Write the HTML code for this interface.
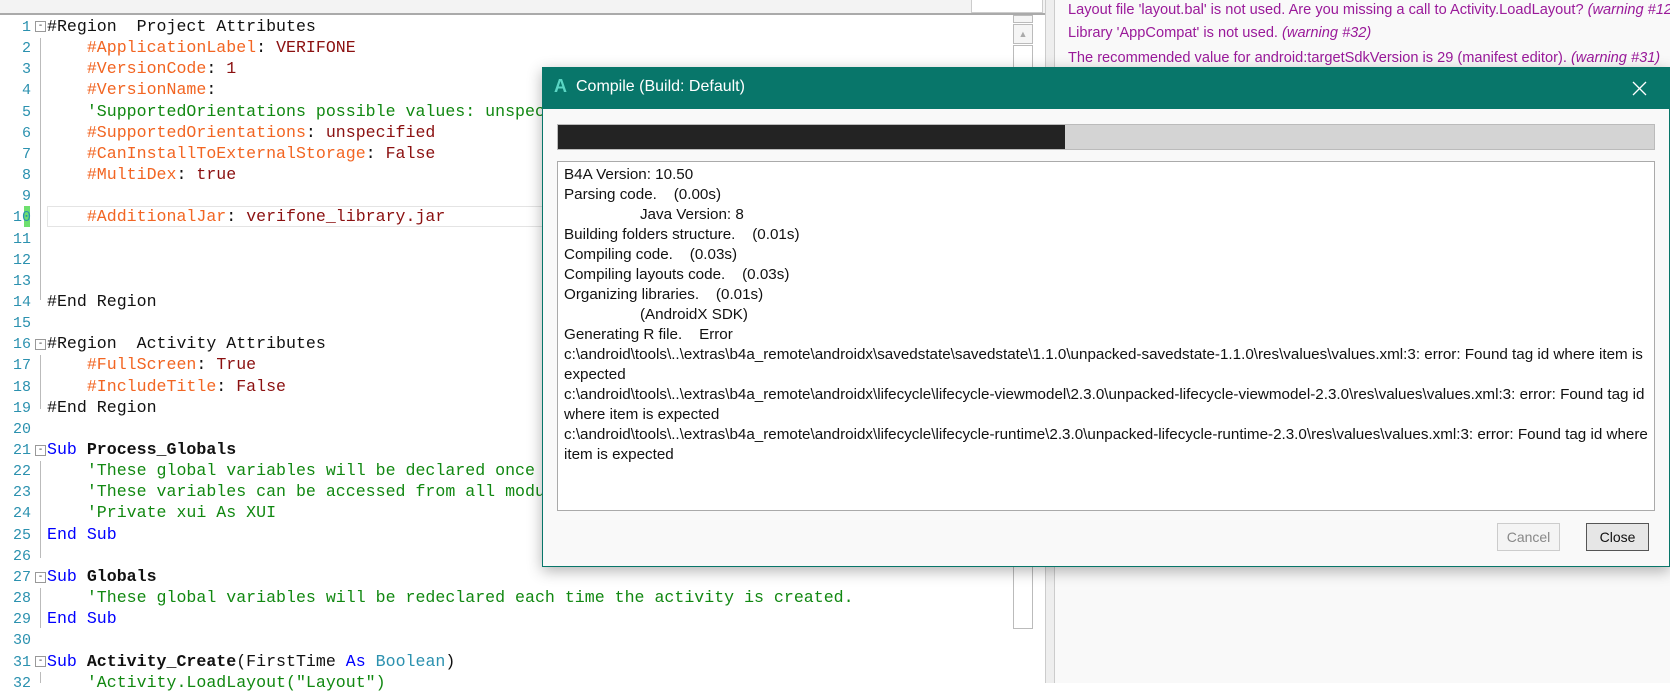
<!DOCTYPE html>
<html><head><meta charset="utf-8"><style>
*{margin:0;padding:0;box-sizing:border-box}
body{width:1670px;height:683px;overflow:hidden;background:#fff;position:relative;font-family:"Liberation Sans",sans-serif}
.code{position:absolute;left:0;top:0;width:1045px;height:683px;background:#fff}
.ln{position:absolute;left:0;width:31px;text-align:right;font:15px "Liberation Mono",monospace;color:#2b91af;line-height:21px}
.l{position:absolute;left:47px;font:16.6px "Liberation Mono",monospace;line-height:21px;white-space:pre;color:#111}
.d{color:#f26522}.v{color:#8b1010}.c{color:#118811}.k{color:#0000ff}.b{font-weight:bold}
.fold{position:absolute;left:35px;width:11px;height:11px;border:1px solid #999;background:#fff;font-size:10px;line-height:8px;text-align:center;color:#333}
.vl{position:absolute;left:40px;width:1px;background:#bbb}
.warn{position:absolute;left:1068px;font-size:14.6px;color:#9a1a9a;white-space:nowrap}
.log div{height:20px;line-height:20px;white-space:pre}
</style></head><body>
<div style="position:absolute;left:0;top:0;width:1670px;height:14px;background:#f3f3f3"></div>
<div style="position:absolute;left:0;top:13px;width:1045px;height:2px;background:#aaa"></div>
<div style="position:absolute;left:971px;top:0;width:72px;height:13px;border:1px solid #ccc;border-top:none;background:#fff"></div>
<div class="code" style="top:15px;height:668px"></div>

<div style="position:absolute;left:1013px;top:15px;width:20px;height:8px;border:1px solid #bbb;background:#f5f5f5"></div>
<div style="position:absolute;left:1013px;top:24px;width:20px;height:20px;border:1px solid #bbb;background:#f5f5f5;color:#aaa;font-size:9px;text-align:center;line-height:18px">▲</div>
<div style="position:absolute;left:1013px;top:45px;width:20px;height:584px;border:1px solid #bbb;background:#fff"></div>
<div style="position:absolute;left:1045px;top:0;width:10px;height:683px;background:#eee;border-left:1px solid #ccc;border-right:1px solid #ccc"></div>
<div style="position:absolute;left:1055px;top:0;width:615px;height:683px;background:#f9f9f9"></div>
<div class="warn" style="top:2px">Layout file 'layout.bal' is not used. Are you missing a call to Activity.LoadLayout? <i>(warning #12)</i></div>
<div class="warn" style="top:25px">Library 'AppCompat' is not used. <i>(warning #32)</i></div>
<div class="warn" style="top:50px">The recommended value for android:targetSdkVersion is 29 (manifest editor). <i>(warning #31)</i></div>

<div style="position:absolute;left:47px;top:206px;width:964px;height:21px;border:1px solid #e4e4e4"></div>
<div style="position:absolute;left:24px;top:206px;width:6px;height:21px;background:#6ee06e"></div>

<div class="vl" style="top:38px;height:262px"></div>
<div class="vl" style="top:355px;height:54px"></div>
<div class="vl" style="top:461px;height:97px"></div>
<div class="vl" style="top:588px;height:40px"></div>
<div class="vl" style="top:672px;height:11px"></div>
<div class="fold" style="top:21px">-</div>
<div class="fold" style="top:339px">-</div>
<div class="fold" style="top:445px">-</div>
<div class="fold" style="top:572px">-</div>
<div class="fold" style="top:656px">-</div>

<div id="lines"></div>
<script>
var L=[
'#Region  Project Attributes',
'    <span class="d">#ApplicationLabel</span>: <span class="v">VERIFONE</span>',
'    <span class="d">#VersionCode</span>: <span class="v">1</span>',
'    <span class="d">#VersionName</span>: ',
'    <span class="c">\'SupportedOrientations possible values: unspecified, landscape or portrait.</span>',
'    <span class="d">#SupportedOrientations</span>: <span class="v">unspecified</span>',
'    <span class="d">#CanInstallToExternalStorage</span>: <span class="v">False</span>',
'    <span class="d">#MultiDex</span>: <span class="v">true</span>',
'',
'    <span class="d">#AdditionalJar</span>: <span class="v">verifone_library.jar</span>',
'','','',
'#End Region',
'',
'#Region  Activity Attributes',
'    <span class="d">#FullScreen</span>: <span class="v">True</span>',
'    <span class="d">#IncludeTitle</span>: <span class="v">False</span>',
'#End Region',
'',
'<span class="k">Sub</span> <span class="b">Process_Globals</span>',
'    <span class="c">\'These global variables will be declared once when the application starts.</span>',
'    <span class="c">\'These variables can be accessed from all modules.</span>',
'    <span class="c">\'Private xui As XUI</span>',
'<span class="k">End Sub</span>',
'',
'<span class="k">Sub</span> <span class="b">Globals</span>',
'    <span class="c">\'These global variables will be redeclared each time the activity is created.</span>',
'<span class="k">End Sub</span>',
'',
'<span class="k">Sub</span> <span class="b">Activity_Create</span>(FirstTime <span class="k">As</span> <span style="color:#2b91af">Boolean</span>)',
'    <span class="c">\'Activity.LoadLayout("Layout")</span>'];
var h='';
for(var i=0;i<L.length;i++){var t=16+i*21.15;
h+='<div class="ln" style="top:'+(t+1)+'px">'+(i+1)+'</div><div class="l" style="top:'+t+'px">'+L[i]+'</div>';}
document.getElementById('lines').innerHTML=h;
</script>

<div style="position:absolute;left:542px;top:67px;width:1128px;height:500px;background:#f9f9f9;border:1px solid #08766a;box-shadow:0 4px 14px rgba(0,0,0,0.3)">
<div style="height:41px;background:#08766a;color:#fff;position:relative">
<span style="position:absolute;left:11px;top:8px;font-size:18px;font-weight:bold;color:#5ad6c4">A</span>
<span style="position:absolute;left:33px;top:10px;font-size:16px">Compile (Build: Default)</span>
<svg style="position:absolute;right:22px;top:13px" width="15" height="15" viewBox="0 0 15 15"><path d="M1 1L14 14M14 1L1 14" stroke="#fff" stroke-width="1.3"/></svg>
</div>
<div style="position:absolute;left:14px;top:56px;width:1098px;height:26px;background:#d4d4d4;border:1px solid #bbb">
<div style="width:507px;height:24px;background:#232323"></div></div>
<div class="log" style="position:absolute;left:14px;top:93px;width:1098px;height:350px;background:#fff;border:1px solid #aaa;padding:3px 0 0 6px;font-size:15.2px;color:#111">
<div>B4A Version: 10.50</div>
<div>Parsing code.    (0.00s)</div>
<div>                  Java Version: 8</div>
<div>Building folders structure.    (0.01s)</div>
<div>Compiling code.    (0.03s)</div>
<div>Compiling layouts code.    (0.03s)</div>
<div>Organizing libraries.    (0.01s)</div>
<div>                  (AndroidX SDK)</div>
<div>Generating R file.    Error</div>
<div>c:\android\tools\..\extras\b4a_remote\androidx\savedstate\savedstate\1.1.0\unpacked-savedstate-1.1.0\res\values\values.xml:3: error: Found tag id where item is</div>
<div>expected</div>
<div>c:\android\tools\..\extras\b4a_remote\androidx\lifecycle\lifecycle-viewmodel\2.3.0\unpacked-lifecycle-viewmodel-2.3.0\res\values\values.xml:3: error: Found tag id</div>
<div>where item is expected</div>
<div>c:\android\tools\..\extras\b4a_remote\androidx\lifecycle\lifecycle-runtime\2.3.0\unpacked-lifecycle-runtime-2.3.0\res\values\values.xml:3: error: Found tag id where</div>
<div>item is expected</div>
</div>
<div style="position:absolute;left:954px;top:455px;width:63px;height:28px;border:1px solid #ccc;background:#f4f4f4;color:#888;font-size:14px;text-align:center;line-height:26px">Cancel</div>
<div style="position:absolute;left:1043px;top:455px;width:63px;height:28px;border:1px solid #555;background:#e6e6e6;color:#111;font-size:14px;text-align:center;line-height:26px">Close</div>
</div>
</body></html>
